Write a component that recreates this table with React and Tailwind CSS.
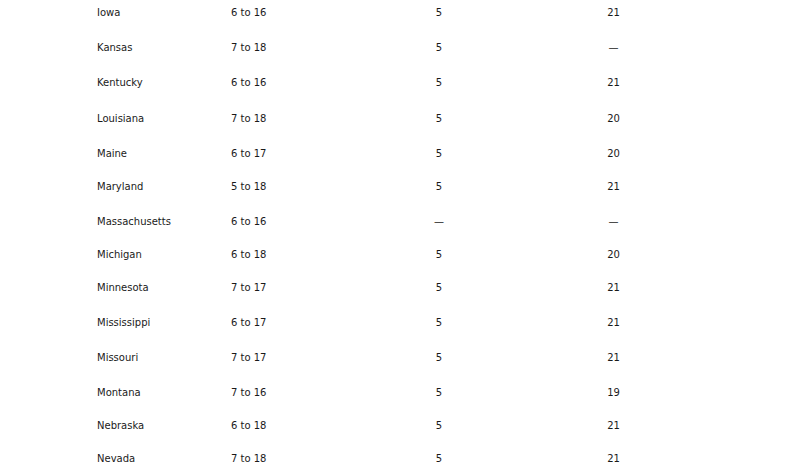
import React from 'react'

const rows = [
  { state: 'Iowa', ages: '6 to 16', k: '5', max: '21', h: 35 },
  { state: 'Kansas', ages: '7 to 18', k: '5', max: '—', h: 35 },
  { state: 'Kentucky', ages: '6 to 16', k: '5', max: '21', h: 36 },
  { state: 'Louisiana', ages: '7 to 18', k: '5', max: '20', h: 35 },
  { state: 'Maine', ages: '6 to 17', k: '5', max: '20', h: 33 },
  { state: 'Maryland', ages: '5 to 18', k: '5', max: '21', h: 35 },
  { state: 'Massachusetts', ages: '6 to 16', k: '—', max: '—', h: 33 },
  { state: 'Michigan', ages: '6 to 18', k: '5', max: '20', h: 33 },
  { state: 'Minnesota', ages: '7 to 17', k: '5', max: '21', h: 35 },
  { state: 'Mississippi', ages: '6 to 17', k: '5', max: '21', h: 35 },
  { state: 'Missouri', ages: '7 to 17', k: '5', max: '21', h: 35 },
  { state: 'Montana', ages: '7 to 16', k: '5', max: '19', h: 33 },
  { state: 'Nebraska', ages: '6 to 18', k: '5', max: '21', h: 33 },
  { state: 'Nevada', ages: '7 to 18', k: '5', max: '21', h: 33 },
]

export default function App() {
  return (
    <div className="w-[809px] h-[465px] overflow-hidden bg-white pl-[97px] text-[10px] leading-[12px] text-[#1a1a1a] font-['Verdana','DejaVu_Sans',sans-serif]">
      {rows.map((r) => (
        <div
          key={r.state}
          className="grid grid-cols-[134px_158px_100px_249px] pt-[7px]"
          style={{ height: r.h }}
        >
          <div>{r.state}</div>
          <div>{r.ages}</div>
          <div className="text-center">{r.k}</div>
          <div className="text-center">{r.max}</div>
        </div>
      ))}
    </div>
  )
}
